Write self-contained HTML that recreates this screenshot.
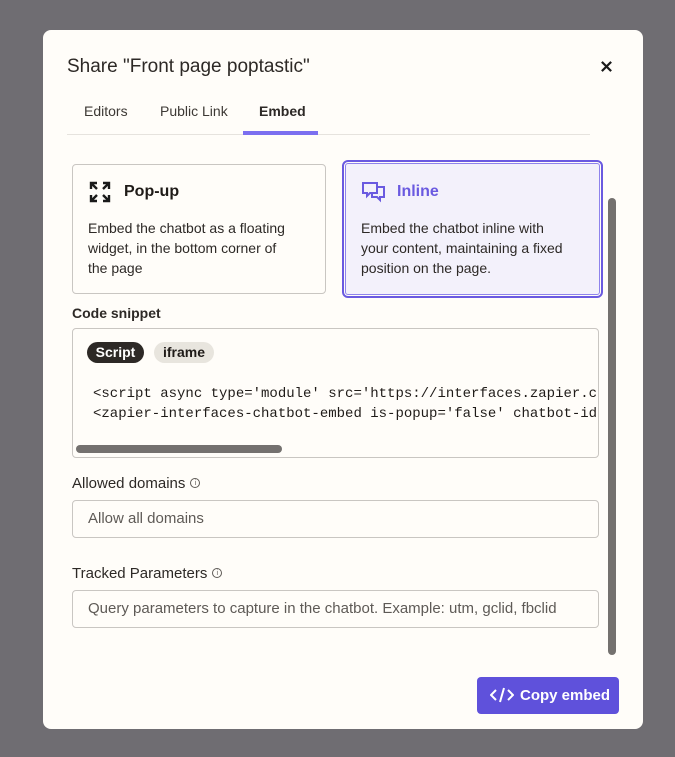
<!DOCTYPE html>
<html><head><meta charset="utf-8"><style>
*{box-sizing:border-box;margin:0;padding:0}
body{width:675px;height:757px;background:#6f6d72;font-family:"Liberation Sans",sans-serif;color:#2d2926;position:relative;overflow:hidden}
.m{position:absolute;left:43px;top:30px;width:600px;height:699px;background:#fffdf9;border-radius:8px}
.a{position:absolute}
.card{position:absolute;border:1.5px solid #c9c6c2;border-radius:4px;background:#fffdf9}
.desc{position:absolute;font-size:14px;line-height:20px;color:#2d2926;white-space:nowrap}
.inp{position:absolute;left:72px;width:527px;height:38px;border:1.5px solid #c9c6c2;border-radius:4px;font-size:15px;color:#5e5a56;padding:9px 15px}
.lbl{position:absolute;left:72px;font-size:15px;color:#2d2926}
.i{display:inline-block;width:10px;height:10px;border:1px solid #5e5a56;border-radius:50%;font-size:7px;text-align:center;line-height:9px;vertical-align:3px;margin-left:5px;color:#5e5a56}
</style></head><body>
<div class="m"></div>
<div class="a" style="left:67px;top:56px;font-size:19px;font-weight:500;color:#2d2926">Share "Front page poptastic"</div>
<svg class="a" style="left:600px;top:60px" width="13" height="13" viewBox="0 0 14 14"><path d="M2 2L12 12M12 2L2 12" stroke="#1a1a1a" stroke-width="2.4"/></svg>
<div class="a" style="left:84px;top:103px;font-size:14px;color:#3d3935">Editors</div>
<div class="a" style="left:160px;top:103px;font-size:14px;color:#3d3935">Public Link</div>
<div class="a" style="left:259px;top:103px;font-size:14px;font-weight:bold;color:#2d2926">Embed</div>
<div class="a" style="left:67px;top:134px;width:523px;height:1px;background:#e6e3de"></div>
<div class="a" style="left:243px;top:131px;width:75px;height:4px;background:#7b6ff0"></div>

<div class="card" style="left:72px;top:164px;width:254px;height:130px"></div>
<svg class="a" style="left:89px;top:181px" width="22" height="22" viewBox="0 0 22 22" fill="none" stroke="#1a1a1a" stroke-width="2.4"><path d="M2 8V2H8M2 2L8 8M14 2H20V8M20 2L14 8M2 14V20H8M2 20L8 14M20 14V20H14M20 20L14 14"/></svg>
<div class="a" style="left:124px;top:183px;font-size:16px;font-weight:bold;color:#1f1b18">Pop-up</div>
<div class="desc" style="left:88px;top:218px">Embed the chatbot as a floating<br>widget, in the bottom corner of<br>the page</div>

<div class="a" style="left:342px;top:160px;width:261px;height:138px;border:2px solid #6a5ae0;border-radius:6px"></div>
<div class="a" style="left:345px;top:163px;width:255px;height:132px;border:1.5px solid #8e83ec;border-radius:3px;background:#f3f1fb"></div>
<svg class="a" style="left:361px;top:181px" width="25" height="22" viewBox="0 0 25 22" fill="none" stroke="#6a5ae0" stroke-width="2"><path d="M2 2H16V12H9L6 15V12H2Z"/><path d="M16 6H23V16H19V19L16 16H11V12"/></svg>
<div class="a" style="left:397px;top:183px;font-size:16px;font-weight:bold;color:#6a5ae0">Inline</div>
<div class="desc" style="left:361px;top:218px">Embed the chatbot inline with<br>your content, maintaining a fixed<br>position on the page.</div>

<div class="a" style="left:608px;top:198px;width:8px;height:457px;background:#74716f;border-radius:4px"></div>

<div class="a" style="left:72px;top:305px;font-size:14px;font-weight:bold">Code snippet</div>
<div class="a" style="left:72px;top:328px;width:527px;height:130px;border:1.5px solid #c9c6c2;border-radius:4px"></div>
<div class="a" style="left:87px;top:342px;width:57px;height:21px;background:#2d2926;border-radius:11px;color:#fff;font-size:14px;font-weight:bold;text-align:center;line-height:21px">Script</div>
<div class="a" style="left:154px;top:342px;width:60px;height:21px;background:#e8e5de;border-radius:11px;color:#1f1b18;font-size:14px;font-weight:bold;text-align:center;line-height:21px">iframe</div>
<div class="a" style="left:93px;top:384px;width:505px;overflow:hidden;white-space:pre;font-family:'Liberation Mono',monospace;font-size:14px;line-height:20px;color:#1f1b18">&lt;script async type='module' src='https://interfaces.zapier.com
&lt;zapier-interfaces-chatbot-embed is-popup='false' chatbot-id</div>
<div class="a" style="left:76px;top:445px;width:206px;height:8px;background:#74716f;border-radius:4px"></div>

<div class="lbl" style="top:475px">Allowed domains<span class="i">i</span></div>
<div class="inp" style="top:500px">Allow all domains</div>
<div class="lbl" style="top:565px">Tracked Parameters<span class="i">i</span></div>
<div class="inp" style="top:590px">Query parameters to capture in the chatbot. Example: utm, gclid, fbclid</div>

<div class="a" style="left:477px;top:677px;width:142px;height:37px;background:#5f51db;border-radius:4px;color:#fff;font-size:15px;font-weight:bold;line-height:37px;padding-left:43px">Copy embed</div>
<svg class="a" style="left:490px;top:686px" width="24" height="18" viewBox="0 0 24 18" fill="none" stroke="#fff" stroke-width="2"><path d="M6 4L1 9L6 14M18 4L23 9L18 14M14 2L10 16"/></svg>
</body></html>
